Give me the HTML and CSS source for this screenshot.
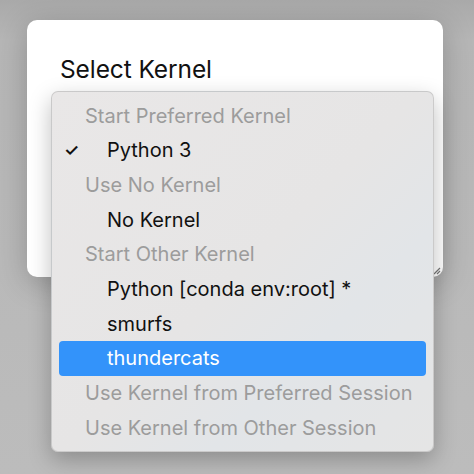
FILE: index.html
```html
<!DOCTYPE html>
<html>
<head>
<meta charset="utf-8">
<link rel="stylesheet" href="styles.css">
</head>
<body>
<div class="stage">
  <div class="dialog">
    <div class="title">Select Kernel</div>
    <svg class="grip" width="10" height="10" viewBox="0 0 10 10"><path d="M9 3 L3 9 M9 6 L6 9" stroke="#777" stroke-width="1.2"/></svg>
  </div>
  <div class="menu">
    <div class="row head">Start Preferred Kernel</div>
    <div class="row item"><span class="check">✓</span>Python 3</div>
    <div class="row head">Use No Kernel</div>
    <div class="row item">No Kernel</div>
    <div class="row head">Start Other Kernel</div>
    <div class="row item">Python [conda env:root] *</div>
    <div class="row item">smurfs</div>
    <div class="row item selected">thundercats</div>
    <div class="row head">Use Kernel from Preferred Session</div>
    <div class="row head">Use Kernel from Other Session</div>
  </div>
</div>
</body>
</html>
```
FILE: styles.css
```css
html, body {
  margin: 0;
  padding: 0;
}
body {
  width: 474px;
  height: 474px;
  overflow: hidden;
  background: #b9b9b9;
  font-family: "Inter", "Liberation Sans", sans-serif;
}
.stage {
  position: relative;
  width: 474px;
  height: 474px;
  background: linear-gradient(180deg, #a9a9a9 0px, #b6b6b6 40px, #bcbcbc 474px);
}
.dialog {
  position: absolute;
  left: 27px;
  top: 20px;
  width: 416px;
  height: 257px;
  background: #ffffff;
  border-radius: 10px;
  box-shadow: 0 6px 30px rgba(0,0,0,0.22);
}
.title {
  padding: 34px 0 0 33px;
  font-size: 24.5px;
  line-height: 30px;
  color: #111;
  letter-spacing: -0.1px;
}
.grip {
  position: absolute;
  right: 2px;
  bottom: 2px;
}
.menu {
  position: absolute;
  left: 51px;
  top: 91px;
  width: 383px;
  box-sizing: border-box;
  padding: 6.5px 7px 5.5px;
  background: linear-gradient(135deg, #e9e7e7 0%, #e6e5e5 50%, #e2e5e8 70%, #e5e5e5 100%);
  border: 1px solid rgba(0,0,0,0.12);
  border-radius: 7px;
  box-shadow: 0 8px 22px rgba(0,0,0,0.25);
  display: flex;
  flex-direction: column;
}
.row {
  height: 34.67px;
  flex: none;
  display: flex;
  align-items: center;
  font-size: 20px;
  border-radius: 4px;
  position: relative;
}
.head {
  color: #9c9c9c;
  padding-left: 26px;
}
.item {
  color: #111;
  padding-left: 48px;
}
.selected {
  background: #3393fa;
  color: #fff;
}
.check {
  position: absolute;
  left: 5px;
  font-size: 17px;
  font-weight: 600;
}
```
